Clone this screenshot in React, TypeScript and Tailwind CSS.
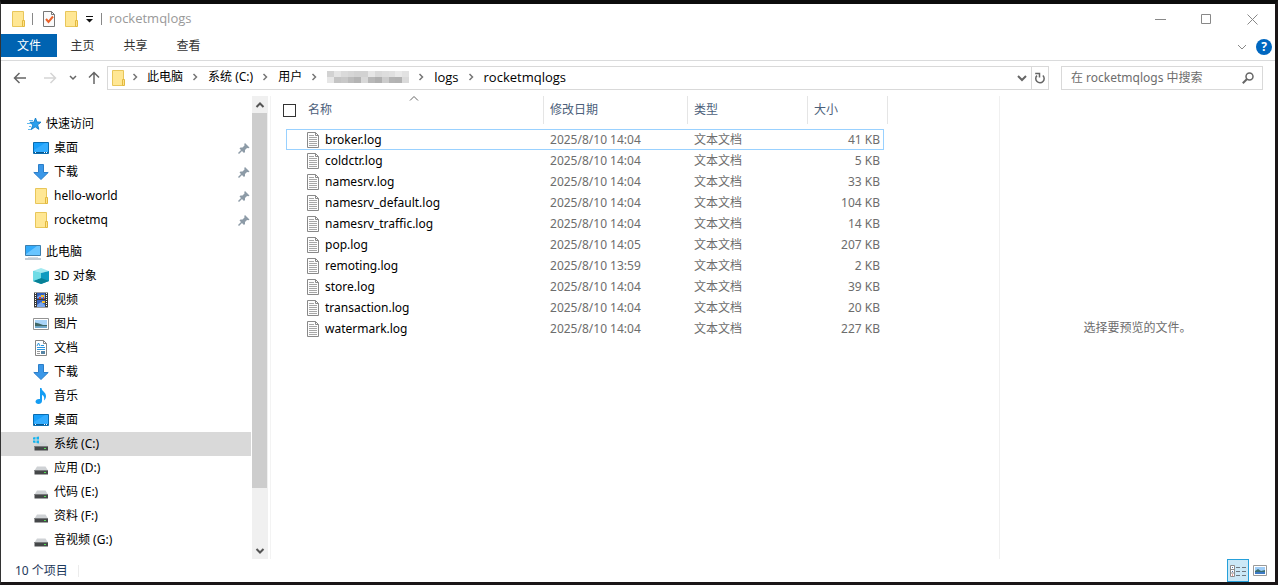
import type { ReactNode } from 'react';

interface NavItem {
  label: string;
  icon: ReactNode;
  pinned?: boolean;
  selected?: boolean;
}

interface LogFile {
  name: string;
  modified: string;
  size: string;
}

const TEXT_TYPE = '文本文档';

const FILES: LogFile[] = [
  { name: 'broker.log', modified: '2025/8/10 14:04', size: '41 KB' },
  { name: 'coldctr.log', modified: '2025/8/10 14:04', size: '5 KB' },
  { name: 'namesrv.log', modified: '2025/8/10 14:04', size: '33 KB' },
  { name: 'namesrv_default.log', modified: '2025/8/10 14:04', size: '104 KB' },
  { name: 'namesrv_traffic.log', modified: '2025/8/10 14:04', size: '14 KB' },
  { name: 'pop.log', modified: '2025/8/10 14:05', size: '207 KB' },
  { name: 'remoting.log', modified: '2025/8/10 13:59', size: '2 KB' },
  { name: 'store.log', modified: '2025/8/10 14:04', size: '39 KB' },
  { name: 'transaction.log', modified: '2025/8/10 14:04', size: '20 KB' },
  { name: 'watermark.log', modified: '2025/8/10 14:04', size: '227 KB' },
];

const QUICK_ACCESS: NavItem[] = [
  { label: '桌面', icon: <DesktopIcon />, pinned: true },
  { label: '下载', icon: <DownloadIcon />, pinned: true },
  { label: 'hello-world', icon: <FolderIcon />, pinned: true },
  { label: 'rocketmq', icon: <FolderIcon />, pinned: true },
];

const THIS_PC: NavItem[] = [
  { label: '3D 对象', icon: <CubeIcon /> },
  { label: '视频', icon: <VideoIcon /> },
  { label: '图片', icon: <PictureIcon /> },
  { label: '文档', icon: <DocumentIcon /> },
  { label: '下载', icon: <DownloadIcon /> },
  { label: '音乐', icon: <MusicIcon /> },
  { label: '桌面', icon: <DesktopIcon /> },
  { label: '系统 (C:)', icon: <DriveIcon system />, selected: true },
  { label: '应用 (D:)', icon: <DriveIcon /> },
  { label: '代码 (E:)', icon: <DriveIcon /> },
  { label: '资料 (F:)', icon: <DriveIcon /> },
  { label: '音视频 (G:)', icon: <DriveIcon /> },
];

function Icon({ children }: { children: ReactNode }) {
  return (
    <svg width="16" height="16" viewBox="0 0 16 16" fill="none" className="shrink-0" aria-hidden="true">
      {children}
    </svg>
  );
}

function FolderIcon() {
  return (
    <Icon>
      <path d="M2.5.5h11v15h-11z" fill="#ffe794" stroke="#e8c65a" />
      <path d="M12.5 9.5h2v6h-2z" fill="#ffe38a" stroke="#e2b93f" />
    </Icon>
  );
}

function DesktopIcon() {
  return (
    <Icon>
      <path d="M.5 2.5h15v11H.5z" fill="#18a0fb" stroke="#0a6cb0" />
      <path d="M1 10L12 3h3v9H1z" fill="#34adff" />
      <path d="M1 12.5h14" stroke="#07578f" />
      <path d="M2 12.5h1M11 12.5h1M13 12.5h1" stroke="#fff" />
    </Icon>
  );
}

function DownloadIcon() {
  return (
    <Icon>
      <path d="M5.5.5h5v8h4.700L8 15.500.8 8.500h4.700z" fill="#3a97e8" stroke="#2b7ec9" />
    </Icon>
  );
}

function StarIcon() {
  return (
    <Icon>
      <path
        d="M9.500 2l1.400 4 4.100.2-3.400 2.600 1.200 4.500-3.600-2.500-3.900 2.700 1.500-4.400L4 6.300l4-.1z"
        fill="#2aa0ee"
        stroke="#1782cc"
      />
      <path d="M3 4.500h4M1 7.500h4M3 10.500h2M2 13.500h3" stroke="#62b9ef" />
    </Icon>
  );
}

function ComputerIcon() {
  return (
    <Icon>
      <path d="M.5 1.500h15v10H.5z" fill="#31aafa" stroke="#3d7fae" />
      <path d="M1 10L12 2h3v9H1z" fill="#69c5ff" />
      <path d="M3 13.500h10" stroke="#d5dce2" />
      <path d="M0 15h16" stroke="#8799aa" />
    </Icon>
  );
}

function CubeIcon() {
  return (
    <Icon>
      <path d="M0 3l8-3 8 3-8 2z" fill="#a3eaf1" />
      <path d="M0 3l8 2v11l-8-3z" fill="#43c9d8" />
      <path d="M16 3L8 5v11l8-3z" fill="#0f9bc0" />
      <path d="M0 13l8-3 8 3-8 3z" fill="#078096" />
      <path d="M0 3l8 2v5l-8 3z" fill="#6fdce6" />
    </Icon>
  );
}

function VideoIcon() {
  return (
    <Icon>
      <path d="M1 .5h14v15H1z" fill="#3a3a3a" />
      <path d="M2.500 1v14M13.500 1v14" stroke="#fff" strokeDasharray="1 1" />
      <path d="M4 1h8v6H4zM4 8h8v7H4z" fill="#3460bd" />
      <path d="M4 5l3-2 2 2 3-3v4H4zM4 13l4-3 4 3v2H4z" fill="#7ba8ed" />
      <path d="M8 3h3v2H8zM9 9h3v2H9z" fill="#f2bd2c" />
      <path d="M6 5h2v2H6zM10 5h1v2h-1z" fill="#d14430" />
    </Icon>
  );
}

function PictureIcon() {
  return (
    <Icon>
      <path d="M.5 2.500h15v11H.5z" fill="#fff" stroke="#939393" />
      <path d="M2 4h12v8H2z" fill="#a9d4f8" />
      <path d="M2 6.500l4 1 4 1.500h4v1.500H2z" fill="#3f6766" />
      <path d="M2 10.500h12V12H2z" fill="#6fa9cf" />
    </Icon>
  );
}

function DocumentIcon() {
  return (
    <Icon>
      <path d="M2.500.5h8l3 3v12h-11z" fill="#fff" stroke="#858585" />
      <path d="M10.500.5v3h3" stroke="#858585" />
      <path d="M4 6l1.500-3L7 6M8 5.500h3M4 7.500h8M4 9.500h8" stroke="#2c96e0" />
      <path d="M4 11.500h3M4 13.500h3" stroke="#999" />
      <path d="M8 11h4v3H8z" fill="#5684a5" />
    </Icon>
  );
}

function MusicIcon() {
  return (
    <Icon>
      <path
        d="M7 0h1.500c.3 3.500 4.500 4 4.500 8 0 2-1 3.500-2 4.500.8-3.500-.5-5-2-5.500v6c0 2-1.700 3-3.500 3S2.500 15 2.500 13.500 4.500 10.500 7 11z"
        fill="#159df3"
      />
    </Icon>
  );
}

function DriveIcon({ system = false }: { system?: boolean }) {
  return (
    <Icon>
      <path d="M4 6.500h8.500l2.500 4H1.500z" fill="#cfd2d5" />
      <path d="M1.500 10h13.500v4.500H1.500z" fill="#454749" />
      <path d="M1.500 10.500H15" stroke="#77797b" />
      <path d="M11 12.500h2" stroke="#50e052" />
      {system && <path d="M0 1.500L2.500 1v2.500H0zM3.500 1L6 .5v3H3.500zM0 4.500h2.500V7L0 6.500zM3.500 4.500H6v3L3.500 7z" fill="#12b3ef" />}
    </Icon>
  );
}

function TextFileIcon() {
  return (
    <Icon>
      <path d="M2.500.5h8l3 3v12h-11z" fill="#fdfdfd" stroke="#898989" />
      <path d="M10.500.5v3h3" stroke="#898989" />
      <path d="M4 3.500h5M4 5.500h8M4 7.500h8M4 9.500h8M4 11.500h8M4 13.500h8" stroke="#a6a6a6" />
    </Icon>
  );
}

function PropertiesIcon() {
  return (
    <Icon>
      <path d="M2.500.5h8l3 3v12h-11z" fill="#fafafa" stroke="#777" />
      <path d="M10.500.5v3h3" stroke="#777" />
      <path d="M5 8l2.500 3L12 5.500" stroke="#e9622b" strokeWidth="2" />
    </Icon>
  );
}

function PinIcon() {
  return (
    <Icon>
      <path d="M10 3l4.500 4.500-1 .7-1.500-.2-2 2v2l-1 1L4.500 8.500l1-1h2l2-2L9.300 4z" fill="#8d9ba7" />
      <path d="M7 10l-3.500 3.500" stroke="#8d9ba7" strokeWidth="1.500" />
    </Icon>
  );
}

function DetailsIcon() {
  return (
    <Icon>
      <path d="M.5 2.500h4v11h-4zM.5 6.500h4M.5 10h4" stroke="#8b8b8b" fill="#fff" />
      <path d="M2 4.500h1M2 8.500h1" stroke="#4f79ae" />
      <path d="M2 12h1" stroke="#d73d31" />
      <path d="M6 4.500h4M12 4.500h4M6 8.500h4M12 8.500h4M6 12.500h4M12 12.500h4" stroke="#6d7880" />
    </Icon>
  );
}

type Direction = 'up' | 'down' | 'right';

const CHEVRONS: Record<Direction, string> = {
  up: 'M1 6.500l4-4 4 4',
  down: 'M1 3l4 4 4-4',
  right: 'M3.500 2l3 3-3 3',
};

function Chevron({ direction, bold = false, className }: { direction: Direction; bold?: boolean; className: string }) {
  return (
    <svg
      width="10"
      height="10"
      viewBox="0 0 10 10"
      fill="none"
      stroke="currentColor"
      strokeWidth={bold ? 1.5 : 1}
      className={className}
      aria-hidden="true"
    >
      <path d={CHEVRONS[direction]} />
    </svg>
  );
}

function TitleBar() {
  return (
    <header className="flex h-[30px] shrink-0 items-center justify-between pl-2">
      <div className="flex items-center pl-px">
        <FolderIcon />
        <span className="mr-2 ml-1.5 h-3 w-px bg-[#888]" />
        <button type="button" aria-label="属性" className="mr-1.5 flex">
          <PropertiesIcon />
        </button>
        <button type="button" aria-label="新建文件夹" className="mr-1.5 flex">
          <FolderIcon />
        </button>
        <button type="button" aria-label="自定义快速访问工具栏">
          <svg width="9" height="8" viewBox="0 0 9 8" aria-hidden="true">
            <path d="M1 1.500h7" stroke="#111" />
            <path d="M1 4h7L4.500 7.500z" fill="#111" />
          </svg>
        </button>
        <span className="mx-[7px] h-3 w-px bg-[#888]" />
        <h1 className="font-['Open_Sans',sans-serif] text-[13px] text-[#999]">rocketmqlogs</h1>
      </div>
      <div className="flex text-[#888]">
        <button type="button" aria-label="最小化" className="flex h-[30px] w-[46px] items-center justify-center">
          <svg width="11" height="11" stroke="currentColor">
            <path d="M0 5.500h11" />
          </svg>
        </button>
        <button type="button" aria-label="最大化" className="flex h-[30px] w-[46px] items-center justify-center">
          <svg width="11" height="11" stroke="currentColor" fill="none">
            <path d="M.5.5h9v9h-9z" />
          </svg>
        </button>
        <button type="button" aria-label="关闭" className="flex h-[30px] w-[46px] items-center justify-center">
          <svg width="11" height="11" stroke="currentColor">
            <path d="M.5.5l10 10M10.500.5l-10 10" />
          </svg>
        </button>
      </div>
    </header>
  );
}

function RibbonTabs() {
  return (
    <div className="flex h-[27px] shrink-0 items-start justify-between border-b border-[#dadbdc] pr-[3px]">
      <div className="flex text-[#333]">
        <button type="button" className="h-[23px] w-14 bg-[#0063b1] text-white">
          文件
        </button>
        {['主页', '共享', '查看'].map((tab) => (
          <button key={tab} type="button" className="h-[23px] w-[53px] pr-0.5">
            {tab}
          </button>
        ))}
      </div>
      <div className="flex h-[26px] items-center gap-[9px]">
        <button type="button" aria-label="展开功能区">
          <Chevron direction="down" className="text-[#888]" />
        </button>
        <button
          type="button"
          aria-label="帮助"
          className="flex size-4 items-center justify-center rounded-full bg-[#0067c0] text-xs font-bold text-white"
        >
          ?
        </button>
      </div>
    </div>
  );
}

const MASK_COLORS = [
  ['#d2d2d2', '#e4e4e4', '#dadada', '#d6d6d6', '#d2d2d2', '#d2d2d2', '#e6e6e6', '#d9d9d9', '#dddddd', '#e0e0e0', '#e9e9e9', '#e2e2e2'],
  ['#e6e6e6', '#c4c4c4', '#c8c8c8', '#bcbcbc', '#b4b4b4', '#d8d8d8', '#b8b8b8', '#b0b0b0', '#cccccc', '#b4b4b4', '#b2b2b2', '#dadada'],
];

function MaskedName() {
  return (
    <svg width="82" height="12" viewBox="0 0 84 12" preserveAspectRatio="none" shapeRendering="crispEdges" role="img" aria-label="用户名">
      {MASK_COLORS.map((row, y) =>
        row.map((color, x) => <rect key={`${x}-${y}`} x={x * 7} y={y * 6} width="7" height="6" fill={color} />),
      )}
    </svg>
  );
}

function Separator() {
  return <Chevron direction="right" bold className="mr-2 ml-[7px] shrink-0 text-[#777]" />;
}

function AddressRow() {
  return (
    <div className="flex h-[35px] shrink-0 items-center pr-3 pb-0.5">
      <div className="flex w-[106px] shrink-0 items-center pl-3 text-[#666]">
        <button type="button" aria-label="后退">
          <svg width="14" height="14" fill="none" stroke="currentColor" strokeWidth="1.500">
            <path d="M13 7H2M6.500 2L1.500 7l5 5" />
          </svg>
        </button>
        <button type="button" aria-label="前进" className="ml-4 text-[#d5d5d5]">
          <svg width="14" height="14" fill="none" stroke="currentColor" strokeWidth="1.500">
            <path d="M1 7h11M7.500 2l5 5-5 5" />
          </svg>
        </button>
        <button type="button" aria-label="最近浏览的位置" className="ml-3">
          <svg width="8" height="8" fill="none" stroke="currentColor" strokeWidth="1.500">
            <path d="M1 2l3 3 3-3" />
          </svg>
        </button>
        <button type="button" aria-label="向上" className="ml-2.5">
          <svg width="14" height="14" fill="none" stroke="currentColor" strokeWidth="1.500">
            <path d="M7 13V2M2 6.500l5-5 5 5" />
          </svg>
        </button>
      </div>
      <div className="flex h-6 flex-1 items-center border border-[#d9d9d9] pl-0.5">
        <FolderIcon />
        <nav className="flex flex-1 items-center" aria-label="地址">
          <Chevron direction="right" bold className="mr-[7px] ml-1 shrink-0 text-[#777]" />
          <a href="#pc">此电脑</a>
          <Separator />
          <a href="#c">系统 (C:)</a>
          <Separator />
          <a href="#users">用户</a>
          <Separator />
          <MaskedName />
          <Separator />
          <a href="#logs" className="font-['Open_Sans',sans-serif] text-[13px]">
            logs
          </a>
          <Separator />
          <a href="#rocketmqlogs" className="font-['Open_Sans',sans-serif] text-[13px]">
            rocketmqlogs
          </a>
        </nav>
        <button type="button" aria-label="以前的位置" className="flex w-3.5 items-center text-[#666]">
          <svg width="10" height="10" fill="none" stroke="currentColor" strokeWidth="2">
            <path d="M1 3l4 4 4-4" />
          </svg>
        </button>
        <button
          type="button"
          aria-label="刷新"
          className="flex h-full w-[17px] items-center justify-center border-l border-[#d9d9d9] text-[#666]"
        >
          <svg width="12" height="12" fill="none" stroke="currentColor" strokeWidth="1.500">
            <path d="M8.800 3.500A4.200 4.200 0 1 1 3 3.600" />
            <path d="M1.200 1.500h4.300v4" />
          </svg>
        </button>
      </div>
      <label className="ml-3 flex h-6 w-[202px] items-center border border-[#d9d9d9] pr-2 pl-[9px]">
        <input
          type="text"
          aria-label="搜索"
          placeholder="在 rocketmqlogs 中搜索"
          className="min-w-0 flex-1 bg-transparent outline-none placeholder:text-[#6d6d6d]"
        />
        <svg width="12" height="12" fill="none" stroke="#666" strokeWidth="1.500" aria-hidden="true">
          <circle cx="7.500" cy="4.500" r="3.500" />
          <path d="M5 7L.8 11.200" strokeWidth="2" />
        </svg>
      </label>
    </div>
  );
}

function NavRow({ item }: { item: NavItem }) {
  return (
    <li>
      <a href="#" className={`flex h-6 items-center gap-[5px] pl-8 ${item.selected ? 'bg-[#d9d9d9]' : ''}`}>
        {item.icon}
        <span className="flex-1">{item.label}</span>
        {item.pinned && <PinIcon />}
      </a>
    </li>
  );
}

function Sidebar() {
  return (
    <aside className="flex w-[270px] shrink-0 border-r border-[#f3f3f3]">
      <nav className="w-[250px] pt-4" aria-label="导航窗格">
        <a href="#quick" className="flex h-6 items-center gap-1 pl-[25px]">
          <StarIcon />
          快速访问
        </a>
        <ul className="mb-2">
          {QUICK_ACCESS.map((item) => (
            <NavRow key={item.label} item={item} />
          ))}
        </ul>
        <a href="#pc" className="flex h-6 items-center gap-[5px] pl-6">
          <ComputerIcon />
          此电脑
        </a>
        <ul>
          {THIS_PC.map((item) => (
            <NavRow key={item.label} item={item} />
          ))}
        </ul>
      </nav>
      <div className="ml-px flex w-4 flex-col bg-[#f0f0f0] text-[#555]">
        <button type="button" aria-label="向上滚动" className="flex h-[17px] items-center justify-center">
          <svg width="10" height="10" fill="none" stroke="currentColor" strokeWidth="2">
            <path d="M1.500 7L5 3.500 8.500 7" />
          </svg>
        </button>
        <div className="mr-px flex flex-1 flex-col">
          <div className="flex-[375] bg-[#cdcdcd]" />
          <div className="flex-[54]" />
        </div>
        <button type="button" aria-label="向下滚动" className="flex h-[17px] items-center justify-center">
          <svg width="10" height="10" fill="none" stroke="currentColor" strokeWidth="2">
            <path d="M1.500 3L5 6.500 8.500 3" />
          </svg>
        </button>
      </div>
    </aside>
  );
}

function FileRow({ file, focused }: { file: LogFile; focused: boolean }) {
  const edge = focused ? 'border-y border-[#99d1ff]' : '';
  return (
    <tr className="h-[21px]">
      <td />
      <td className={`border-l ${focused ? edge : 'border-l-transparent'}`}>
        <span className="flex items-center gap-1 pl-[18px]">
          <TextFileIcon />
          {file.name}
        </span>
      </td>
      <td className={`pl-1.5 text-[#6d6d6d] ${edge}`}>{file.modified}</td>
      <td className={`pl-1.5 text-[#6d6d6d] ${edge}`}>{TEXT_TYPE}</td>
      <td className={`text-right text-[#6d6d6d] ${edge} ${focused ? 'border-r pr-[3px]' : 'pr-1'}`}>{file.size}</td>
      <td />
    </tr>
  );
}

function FileList() {
  return (
    <main className="flex-1 pl-px">
      <table className="w-[616px] table-fixed border-separate border-spacing-0 leading-4">
        <colgroup>
          <col className="w-3.5" />
          <col className="w-[258px]" />
          <col className="w-36" />
          <col className="w-[120px]" />
          <col className="w-[76px]" />
          <col className="w-1" />
        </colgroup>
        <thead className="text-left text-[#4c607a]">
          <tr className="h-7">
            <th colSpan={2} className="relative border-r border-[#e5e5e5] pl-[11px] font-normal">
              <span className="flex items-center gap-3">
                <input type="checkbox" aria-label="全选" className="size-[13px] appearance-none border border-[#333] bg-white" />
                名称
              </span>
              <Chevron direction="up" className="absolute top-[-2px] left-[137px] text-[#666]" />
            </th>
            <th className="border-r border-[#e5e5e5] pl-1.5 font-normal">修改日期</th>
            <th className="border-r border-[#e5e5e5] pl-1.5 font-normal">类型</th>
            <th colSpan={2} className="border-r border-[#e5e5e5] pl-1.5 font-normal">
              大小
            </th>
          </tr>
        </thead>
        <tbody>
          <tr className="h-[5px]" aria-hidden="true">
            <td colSpan={6} />
          </tr>
          {FILES.map((file, index) => (
            <FileRow key={file.name} file={file} focused={index === 0} />
          ))}
        </tbody>
      </table>
    </main>
  );
}

function StatusBar() {
  return (
    <footer className="flex h-[23px] shrink-0 items-center justify-between pr-2 pl-3.5">
      <div className="flex items-center gap-2.5 text-[#1e395b]">
        10 个项目
        <span className="h-3 w-px bg-[#ececec]" />
      </div>
      <div className="flex items-center gap-1">
        <button
          type="button"
          aria-label="详细信息"
          className="flex h-[23px] w-[22px] items-center justify-center border border-[#26a0da] bg-[#cbe8f6]"
        >
          <DetailsIcon />
        </button>
        <button type="button" aria-label="大图标">
          <svg width="14" height="12" fill="none" aria-hidden="true">
            <path d="M.5.5h13v10H.5z" fill="#fff" stroke="#999" />
            <path d="M2 2h10v7H2z" fill="#9fcdf7" />
            <path d="M2 6l3-2 3 2 4-1v2H2z" fill="#3c6f71" />
            <path d="M2 7h10v2H2z" fill="#3d7ac6" />
          </svg>
        </button>
      </div>
    </footer>
  );
}

export default function App() {
  return (
    <div className="flex min-h-screen flex-col border-t-4 border-r-3 border-b-3 border-l border-t-[#0c0c0c] border-r-[#1a1617] border-b-[#1a1617] border-l-[#333] bg-white font-['Noto_Sans','Noto_Sans_CJK_SC',sans-serif] text-xs text-black">
      <TitleBar />
      <RibbonTabs />
      <AddressRow />
      <div className="flex flex-1">
        <Sidebar />
        <FileList />
        <section className="flex w-[276px] shrink-0 items-center justify-center border-l border-[#f0f0f0] text-[#6d6d6d]">
          选择要预览的文件。
        </section>
      </div>
      <StatusBar />
    </div>
  );
}
